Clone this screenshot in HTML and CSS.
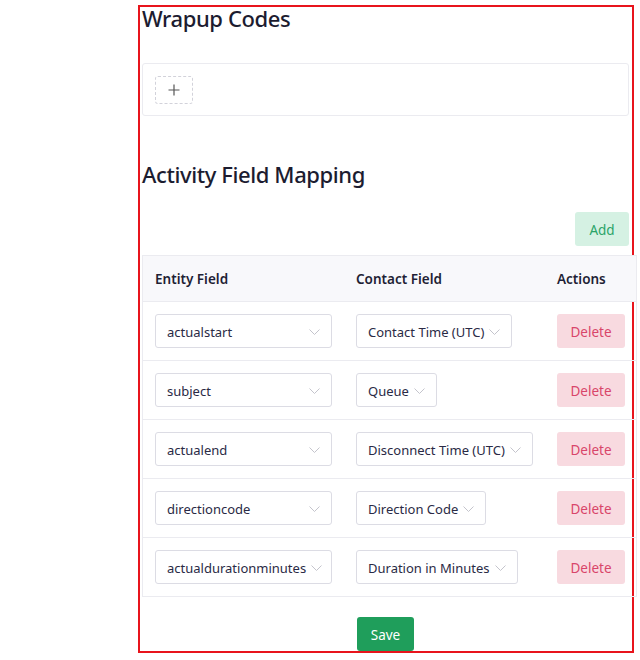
FILE: index.html
```html
<!DOCTYPE html>
<html lang="en">
<head>
<meta charset="utf-8">
<title>Wrapup Codes</title>
<link rel="stylesheet" href="styles.css">
</head>
<body>
<div class="panel">
  <h2 class="title">Wrapup Codes</h2>
  <div class="wrapup-box">
    <button class="plus-btn" type="button" aria-label="Add wrapup code">
      <svg width="12" height="12" viewBox="0 0 12 12"><path d="M6 0.5V11.5M0.5 6H11.5" stroke="#555" stroke-width="1.2" fill="none"/></svg>
    </button>
  </div>

  <h2 class="title title-mapping">Activity Field Mapping</h2>
  <div class="toolbar">
    <button class="btn btn-add" type="button">Add</button>
  </div>

  <div class="table-wrap">
    <table class="map-table">
      <colgroup>
        <col class="c1"><col class="c2"><col class="c3">
      </colgroup>
      <thead>
        <tr><th class="p1">Entity Field</th><th class="p2">Contact Field</th><th class="p3">Actions</th></tr>
      </thead>
      <tbody>
        <tr>
          <td class="p1"><div class="select select-entity"><span class="sel-text">actualstart</span><svg class="chev" width="11" height="6" viewBox="0 0 11 6"><path d="M0.5 0.5L5.5 5.5L10.5 0.5" stroke="#c4c4cc" stroke-width="1" fill="none"/></svg></div></td>
          <td class="p2"><div class="select"><span class="sel-text">Contact Time (UTC)</span><svg class="chev" width="11" height="6" viewBox="0 0 11 6"><path d="M0.5 0.5L5.5 5.5L10.5 0.5" stroke="#c4c4cc" stroke-width="1" fill="none"/></svg></div></td>
          <td class="p3"><button class="btn btn-delete" type="button">Delete</button></td>
        </tr>
        <tr>
          <td class="p1"><div class="select select-entity"><span class="sel-text">subject</span><svg class="chev" width="11" height="6" viewBox="0 0 11 6"><path d="M0.5 0.5L5.5 5.5L10.5 0.5" stroke="#c4c4cc" stroke-width="1" fill="none"/></svg></div></td>
          <td class="p2"><div class="select"><span class="sel-text">Queue</span><svg class="chev" width="11" height="6" viewBox="0 0 11 6"><path d="M0.5 0.5L5.5 5.5L10.5 0.5" stroke="#c4c4cc" stroke-width="1" fill="none"/></svg></div></td>
          <td class="p3"><button class="btn btn-delete" type="button">Delete</button></td>
        </tr>
        <tr>
          <td class="p1"><div class="select select-entity"><span class="sel-text">actualend</span><svg class="chev" width="11" height="6" viewBox="0 0 11 6"><path d="M0.5 0.5L5.5 5.5L10.5 0.5" stroke="#c4c4cc" stroke-width="1" fill="none"/></svg></div></td>
          <td class="p2"><div class="select"><span class="sel-text">Disconnect Time (UTC)</span><svg class="chev" width="11" height="6" viewBox="0 0 11 6"><path d="M0.5 0.5L5.5 5.5L10.5 0.5" stroke="#c4c4cc" stroke-width="1" fill="none"/></svg></div></td>
          <td class="p3"><button class="btn btn-delete" type="button">Delete</button></td>
        </tr>
        <tr>
          <td class="p1"><div class="select select-entity"><span class="sel-text">directioncode</span><svg class="chev" width="11" height="6" viewBox="0 0 11 6"><path d="M0.5 0.5L5.5 5.5L10.5 0.5" stroke="#c4c4cc" stroke-width="1" fill="none"/></svg></div></td>
          <td class="p2"><div class="select"><span class="sel-text">Direction Code</span><svg class="chev" width="11" height="6" viewBox="0 0 11 6"><path d="M0.5 0.5L5.5 5.5L10.5 0.5" stroke="#c4c4cc" stroke-width="1" fill="none"/></svg></div></td>
          <td class="p3"><button class="btn btn-delete" type="button">Delete</button></td>
        </tr>
        <tr class="last">
          <td class="p1"><div class="select select-entity"><span class="sel-text">actualdurationminutes</span><svg class="chev" width="11" height="6" viewBox="0 0 11 6"><path d="M0.5 0.5L5.5 5.5L10.5 0.5" stroke="#c4c4cc" stroke-width="1" fill="none"/></svg></div></td>
          <td class="p2"><div class="select"><span class="sel-text">Duration in Minutes</span><svg class="chev" width="11" height="6" viewBox="0 0 11 6"><path d="M0.5 0.5L5.5 5.5L10.5 0.5" stroke="#c4c4cc" stroke-width="1" fill="none"/></svg></div></td>
          <td class="p3"><button class="btn btn-delete" type="button">Delete</button></td>
        </tr>
      </tbody>
    </table>
  </div>

  <div class="footer">
    <button class="btn btn-save" type="button">Save</button>
  </div>
</div>
</body>
</html>
```

FILE: styles.css
```css
html, body {
  margin: 0;
  padding: 0;
  background: #ffffff;
}

body {
  font-family: "Noto Sans", "Open Sans", sans-serif;
  color: #22223a;
}

.panel {
  margin: 5px 0 0 138px;
  width: 496px;
  box-sizing: border-box;
  border: 2px solid #e8141c;
  padding: 0 3px 0 2px;
}

.title {
  margin: 0;
  font-size: 22px;
  line-height: 22px;
  font-weight: 500;
  letter-spacing: -0.4px;
  color: #1c1c30;
}

.wrapup-box {
  margin-top: 34px;
  height: 53px;
  box-sizing: border-box;
  border: 1px solid #ebebf0;
  border-radius: 3px;
  padding: 12px 12px 0 12px;
}

.plus-btn {
  width: 38px;
  height: 28px;
  box-sizing: border-box;
  border: 1px dashed #d2d2da;
  border-radius: 3px;
  background: #ffffff;
  padding: 0;
  display: flex;
  align-items: center;
  justify-content: center;
}

.title-mapping {
  margin-top: 47px;
}

.toolbar {
  margin-top: 27px;
  display: flex;
  justify-content: flex-end;
}

.btn {
  height: 34px;
  box-sizing: border-box;
  border: none;
  border-radius: 3px;
  font-family: "Noto Sans", "Open Sans", sans-serif;
  font-size: 13.5px;
  line-height: normal;
  padding: 1px 0 0 0;
  display: inline-flex;
  align-items: center;
  justify-content: center;
}

.btn-add {
  width: 54px;
  background: #d5f1e3;
  color: #2aa468;
}

.btn-delete {
  width: 68px;
  background: #f8dae0;
  color: #d9456a;
}

.btn-save {
  width: 57px;
  background: #1f9e5b;
  color: #ffffff;
}

.table-wrap {
  margin-top: 9px;
  width: 495px;
  box-sizing: border-box;
  border: 1px solid #ebebf0;
}

.map-table {
  width: 493px;
  border-collapse: separate;
  border-spacing: 0;
  table-layout: fixed;
}

.c1 { width: 200px; }
.c2 { width: 201px; }
.c3 { width: 92px; }

.map-table th {
  height: 46px;
  box-sizing: border-box;
  padding: 0;
  text-align: left;
  font-size: 13.5px;
  font-weight: 600;
  color: #1f1f35;
  background: #f8f8fb;
  border-bottom: 1px solid #ebebf0;
}

.map-table td {
  height: 59px;
  box-sizing: border-box;
  padding: 0;
  vertical-align: middle;
  border-bottom: 1px solid #ebebf0;
}

.map-table tr.last td {
  border-bottom: none;
  height: 58px;
}

.map-table .p1 { padding-left: 12px; }
.map-table .p2 { padding-left: 13px; }
.map-table .p3 { padding-left: 13px; }

.select {
  display: inline-flex;
  align-items: center;
  height: 34px;
  box-sizing: border-box;
  border: 1px solid #dcdce4;
  border-radius: 3px;
  padding: 2px 11px 0 11px;
  gap: 5px;
  font-size: 13px;
  color: #2a2a45;
  background: #ffffff;
  white-space: nowrap;
  vertical-align: middle;
}

.select-entity {
  display: flex;
  width: 177px;
  justify-content: space-between;
}

.sel-text {
  line-height: normal;
}

.chev {
  flex: none;
  margin-top: -1px;
}

.footer {
  margin-top: 20px;
  display: flex;
  justify-content: center;
}
```
